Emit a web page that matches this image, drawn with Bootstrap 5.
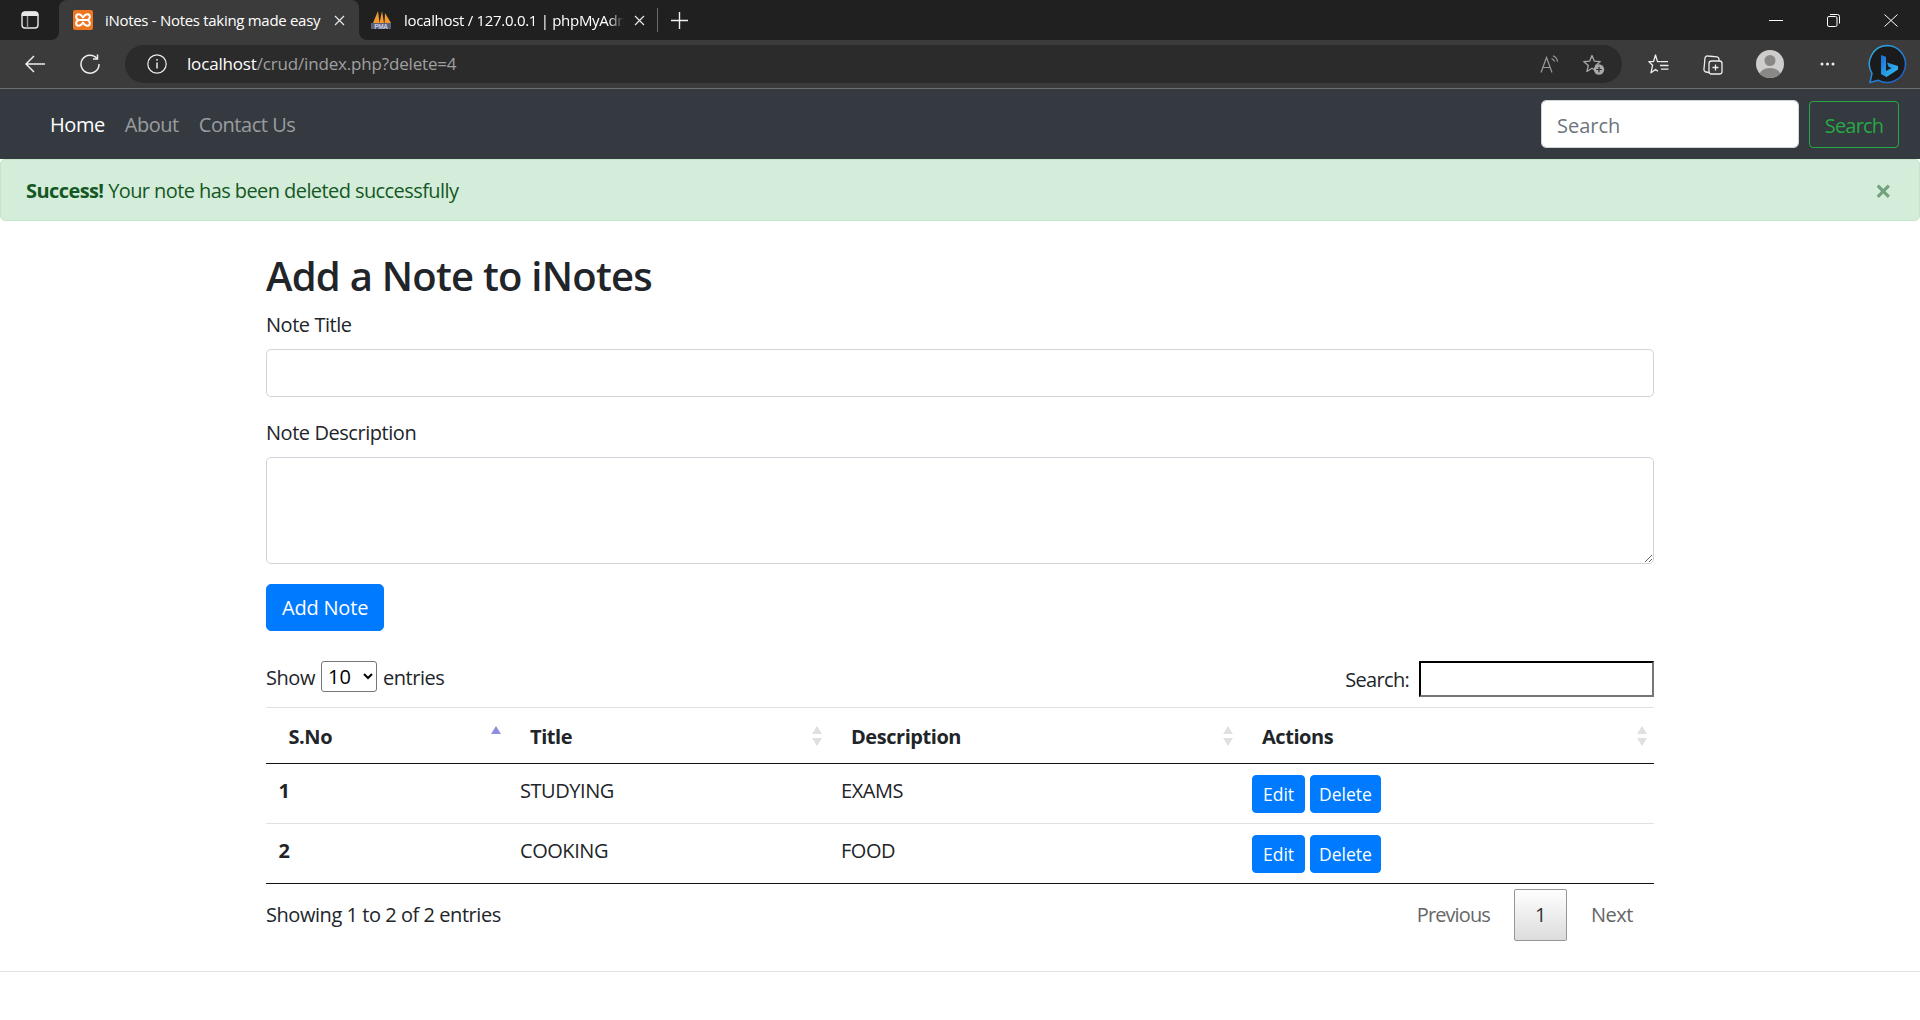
<!DOCTYPE html>
<html lang="en">
<head>
  <meta charset="UTF-8" />
  <meta name="viewport" content="width=device-width, initial-scale=1" />
  <title>iNotes - Notes taking made easy</title>
  <link href="https://cdn.jsdelivr.net/npm/bootstrap@5.3.3/dist/css/bootstrap.min.css" rel="stylesheet" />
  <style>
    html { font-size: 20px; }
    body {
      --bs-body-font-family: "Open Sans", "Noto Sans", sans-serif;
      --bs-body-font-size: 1rem;
      --bs-body-color: #212529;
      letter-spacing: -0.45px;
    }
    /* browser chrome */
    .tabstrip { height: 40px; background: linear-gradient(#202020 50%, #3b3b3b 50%); color: #fff; font-size: 15px; letter-spacing: -0.3px; }
    .strip-left { width: 59px; background: #202020; border-bottom-right-radius: 8px; }
    .strip-right { background: #202020; border-bottom-left-radius: 8px; padding-left: 11px; }
    .tab-on { width: 300px; background: #3b3b3b; border-radius: 8px 8px 0 0; padding-left: 14px; }
    .tab-off { width: 287px; padding-right: 12px; }
    .tab-title { margin-left: 12px; white-space: nowrap; overflow: hidden; flex: 1; }
    .tab-fade { -webkit-mask-image: linear-gradient(90deg, #000 93%, transparent); mask-image: linear-gradient(90deg, #000 93%, transparent); }
    .tab-x { margin-right: 14px; }
    .tab-x2 { margin-left: 10px; }
    .win-ctrl { gap: 44px; padding-right: 22px; }
    .toolbar { height: 49px; background: #3b3b3b; border-bottom: 1px solid #6e6e6e; padding-left: 25px; padding-right: 13px; }
    .urlbar { height: 38px; background: #2b2b2b; border-radius: 19px; margin-left: 25px; padding: 0 17px 0 22px; font-size: 17px; letter-spacing: -0.17px; color: #a0a0a0; }
    .urlbar b { font-weight: 400; color: #fff; }
    .ml-35 { margin-left: 35px; }
    .ml-26 { margin-left: 26px; }
    .ml-33 { margin-left: 33px; }
    .ml-36 { margin-left: 36px; }
    .ml-32 { margin-left: 32px; }
    .ml-20 { margin-left: 20px; }
    .ml-22 { margin-left: 22px; }
    .ml-13 { margin-left: 13px; }

    /* page */
    .nav-dark { background: #343a40; height: 70px; padding: 0 21px 0 40px; --bs-navbar-color: rgba(255,255,255,.5); --bs-navbar-active-color: #fff; --bs-navbar-nav-link-padding-x: .5rem; }
    .nav-dark .nav-link { padding-top: 11px; padding-bottom: 9px; }
    .nav-search { width: 258px; height: 48px; margin-right: 10px; border-radius: 5px; padding-top: 8px; padding-bottom: 6px; }
    .btn-search { --bs-btn-color: #28a745; --bs-btn-border-color: #28a745; --bs-btn-padding-x: 0; --bs-btn-border-radius: 4px; width: 90px; letter-spacing: -.8px; padding-top: 9px; padding-bottom: 6px; margin-top: 1px; }
    .alert-note { --bs-alert-padding-x: 1.25rem; --bs-alert-padding-y: .75rem; --bs-alert-margin-bottom: 0; --bs-alert-bg: #d4edda; --bs-alert-border-color: #c3e6cb; --bs-alert-color: #155724; --bs-alert-border-radius: 5px; letter-spacing: -.58px; padding-top: 16px; padding-bottom: 14px; }
    .alert-x { font-size: 30px; font-weight: 700; line-height: 30px; color: #155724; opacity: .5; margin-right: 2px; letter-spacing: 0; }
    .page-box { width: 1388px; margin: 30px auto; }
    .page-box h2 { font-weight: 600; line-height: 48px; margin-bottom: 9px; padding-top: 1px; letter-spacing: -.75px; }
    .page-box .form-label { padding-top: 1px; margin-bottom: 9px; }
    .form-control { border-color: #ced4da; border-radius: 5px; min-height: 48px; }
    .form-control::placeholder { color: #6c757d; }
    .note-area { height: 107px; }
    .btn-blue { --bs-btn-bg: #007bff; --bs-btn-border-color: #007bff; --bs-btn-hover-bg: #0069d9; --bs-btn-border-radius: 5px; }
    .btn-add { letter-spacing: -.2px; }
    .dt-select { width: 56px; height: 31px; font-size: 20px; border: 1px solid #767676; border-radius: 3px; background: #fff; margin: 0 6px; padding-left: 2px; }
    .dt-top > div span { padding-top: 2px; }
    .dt-search { width: 235px; height: 36px; border-width: 2px; border-style: inset; border-color: #1f1f1f #767676 #767676 #1f1f1f; margin-left: 10px; }
    .dt-search-label { letter-spacing: -.7px; padding-top: 2px; }
    .dt-top { height: 36px; margin-bottom: 10px; }
    .dt-table { table-layout: fixed; margin: 0; border-top: 1px solid #dee2e6; --bs-table-border-color: #dee2e6; }
    .dt-table th { height: 56px; padding: 2px 22.5px 0; border-bottom: 1px solid #111; vertical-align: middle; font-weight: 700; position: relative; }
    .dt-table td { height: 60px; padding: 12px 12.5px 0; vertical-align: top; }
    .dt-table td.acts { padding-top: 10.5px; }
    .dt-table tbody tr:last-child td { border-bottom: 1px solid #111; }
    .col-sno { width: 241.5px; }
    .col-title { width: 321px; }
    .col-desc { width: 411px; }
    .sort-arrows { position: absolute; right: 7px; top: 18px; }
    .btn-sm { --bs-btn-padding-x: .5rem; --bs-btn-padding-y: .25rem; --bs-btn-border-radius: 4px; }
    .btn-del { --bs-btn-padding-x: .4rem; }
    .dt-info { padding-top: 16px; }
    .dt-pages { --bs-pagination-padding-x: 1rem; --bs-pagination-padding-y: .5rem; --bs-pagination-color: #333; --bs-pagination-bg: transparent; --bs-pagination-border-color: transparent; --bs-pagination-disabled-color: #666; --bs-pagination-disabled-bg: transparent; --bs-pagination-disabled-border-color: transparent; --bs-pagination-border-radius: 2px; gap: 3px; margin: 5px 0 0; }
    .dt-pages .page-link { margin: 0 !important; }
    .dt-pages .page-prev { letter-spacing: -.9px; }
    .dt-pages .on { background: linear-gradient(#fff, #dcdcdc); border-color: #979797; color: #333; border-radius: 2px; }
    .foot-line { margin: 0; border: 0; border-top: 1px solid #e2e2e2; opacity: 1; }
  </style>
</head>
<body>
  <!-- browser window -->
  <div class="tabstrip d-flex">
    <div class="strip-left d-flex align-items-center justify-content-center">
      <svg width="18" height="18" viewBox="0 0 18 18" fill="none" stroke="#e8e8e8"><rect x="1" y="1" width="16" height="16" rx="3" stroke-width="1.4"/><path d="M1 4.5V4a3 3 0 0 1 3-3h10a3 3 0 0 1 3 3v.5z" fill="#e8e8e8"/><path d="M6.5 5v12" stroke="#9a9a9a" stroke-width="1.4"/></svg>
    </div>
    <div class="tab-on d-flex align-items-center">
      <svg width="20" height="20" viewBox="0 0 20 20" fill="none"><rect width="20" height="20" rx="2" fill="#f0751f"/><path d="M10 7.500Q7.500 3.500 5 4.300 2.500 5.200 3.300 7.800 4 10 6.500 10 4 10 3.300 12.200 2.500 14.800 5 15.700 7.500 16.500 10 12.500 12.500 16.500 15 15.700 17.500 14.800 16.700 12.200 16 10 13.500 10 16 10 16.700 7.800 17.500 5.200 15 4.300 12.500 3.500 10 7.500zM7 10h6" stroke="#fff" stroke-width="2" stroke-linejoin="round"/></svg>
      <span class="tab-title">iNotes - Notes taking made easy</span>
      <svg class="tab-x" width="11" height="11" viewBox="0 0 11 11" stroke="#e8e8e8" stroke-width="1.2"><path d="M1 1l9 9M10 1l-9 9"/></svg>
    </div>
    <div class="strip-right flex-grow-1 d-flex align-items-center">
      <div class="tab-off d-flex align-items-center">
        <svg width="22" height="20" viewBox="0 0 22 20"><path d="M3 13 8 1l1.500 12zM9.500 13 12 1l2 12zM14.500 13 15 3l6 10z" fill="#f29a2e"/><rect x="1" y="13" width="20" height="6" fill="#5a6078"/><text x="11" y="18.600" text-anchor="middle" font-size="6.500" font-weight="700" fill="#c8cce0" font-family="Liberation Sans, sans-serif">PMA</text></svg>
        <span class="tab-title tab-fade">localhost / 127.0.0.1 | phpMyAdmin</span>
        <svg class="tab-x2" width="11" height="11" viewBox="0 0 11 11" stroke="#e8e8e8" stroke-width="1.2"><path d="M1 1l9 9M10 1l-9 9"/></svg>
      </div>
      <svg width="1" height="24"><rect width="1" height="24" fill="#6a6a6a"/></svg>
      <svg class="ml-13" width="17" height="17" viewBox="0 0 17 17" stroke="#f0f0f0" stroke-width="1.4"><path d="M8.500 0v17M0 8.500h17"/></svg>
      <div class="win-ctrl ms-auto d-flex align-items-center">
        <svg width="14" height="13" viewBox="0 0 14 13" stroke="#fff"><path d="M0 6.500h14"/></svg>
        <svg width="13" height="13" viewBox="0 0 13 13" fill="none" stroke="#fff"><rect x=".5" y="2.500" width="9.500" height="10" rx="1.500"/><path d="M3 .5h7.500a2 2 0 0 1 2 2v7"/></svg>
        <svg width="14" height="13" viewBox="0 0 14 13" stroke="#fff"><path d="M.5.5l13 12M13.500.5l-13 12"/></svg>
      </div>
    </div>
  </div>

  <div class="toolbar d-flex align-items-center">
    <svg width="20" height="18" viewBox="0 0 20 18" fill="none" stroke="#eee" stroke-width="1.5"><path d="M9 1 1 9l8 8M1 9h19"/></svg>
    <svg class="ml-35" width="20" height="20" viewBox="0 0 20 20" fill="none" stroke="#eee" stroke-width="1.5"><path d="M17 4.500A9 9 0 1 0 19 10"/><path d="M17.500 .5v4.500H13"/></svg>
    <div class="urlbar flex-grow-1 d-flex align-items-center">
      <svg width="20" height="20" viewBox="0 0 20 20" fill="none" stroke="#eee" stroke-width="1.2"><circle cx="10" cy="10" r="9.200"/><path d="M10 8.500v6" stroke-width="1.500"/><circle cx="10" cy="5.800" r=".9" fill="#eee" stroke="none"/></svg>
      <span class="ml-20"><b>localhost</b>/crud/index.php?delete=4</span>
      <svg class="ms-auto" width="21" height="18" viewBox="0 0 21 18" fill="none" stroke="#9a9a9a" stroke-width="1.2"><path d="M1 17.500 6.500 2.500 12 17.500M3 12.500h7"/><path d="M11.500 3.500a4 4 0 0 1 3 3M13 .8a7 7 0 0 1 4.500 6"/></svg>
      <svg class="ml-22" width="22" height="21" viewBox="0 0 22 21" fill="none"><path d="M9 1.500l2.300 5.600 6 .5-4.600 3.900 1.400 5.900L9 14.300 3.900 17.500l1.400-5.900L.7 7.600l6-.5z" stroke="#a8a8a8" stroke-width="1.3" stroke-linejoin="round"/><circle cx="16" cy="15.500" r="5.200" fill="#a8a8a8"/><path d="M16 12.800v5.400M13.300 15.500h5.400" stroke="#2b2b2b" stroke-width="1.2"/></svg>
    </div>
    <svg class="ml-26" width="21" height="20" viewBox="0 0 21 20" fill="none" stroke="#eee" stroke-width="1.3"><path d="M12.800 7.600H9.500L7.500 1 5.500 7.600H.8l3.800 3.600L3 18.800l4.500-3.400 2.500 1.900" stroke-linejoin="round"/><path d="M13 7.600h7M12 11.500h8.500M13 15.200h7.500"/></svg>
    <svg class="ml-33" width="21" height="21" viewBox="0 0 21 21" fill="none" stroke="#eee" stroke-width="1.3"><rect x="7" y="7" width="13" height="13" rx="2.500"/><path d="M13.500 10.500v6M10.500 13.500h6"/><path d="M7 18.500 4 18a2.500 2.500 0 0 1-2-3L3 4a2.500 2.500 0 0 1 3-2l9 .8a2.500 2.500 0 0 1 2 2.500V7"/></svg>
    <svg class="ml-33" width="28" height="28" viewBox="0 0 28 28"><defs><clipPath id="avatarClip"><circle cx="14" cy="14" r="14"/></clipPath></defs><circle cx="14" cy="14" r="14" fill="#cfcdcb"/><g clip-path="url(#avatarClip)" fill="#8a8886"><circle cx="14" cy="10.500" r="5.500"/><ellipse cx="14" cy="25" rx="10.500" ry="7"/></g></svg>
    <svg class="ml-36" width="15" height="4" viewBox="0 0 15 4" fill="#eee"><circle cx="2" cy="2" r="1.500"/><circle cx="7.500" cy="2" r="1.500"/><circle cx="13" cy="2" r="1.500"/></svg>
    <svg class="ml-32" width="40" height="40" viewBox="0 0 40 40"><defs><linearGradient id="bingRing" x1="0" y1="0" x2="1" y2="1"><stop offset="0" stop-color="#2fb5e8"/><stop offset="1" stop-color="#1a55c8"/></linearGradient><linearGradient id="bingB" x1="0" y1="0" x2="1" y2="1"><stop offset="0" stop-color="#1a6ed8"/><stop offset="1" stop-color="#35c1f1"/></linearGradient></defs><path d="M20 1.500A18.500 18.500 0 1 1 11 36.200L3 38.500l2-9A18.500 18.500 0 0 1 20 1.500z" fill="#1b1b1b" stroke="url(#bingRing)" stroke-width="1.500"/><path d="M14 11l5 1.800V27l5.500-3-3-1.300-1.500-4.200L31 22v3.500L19.500 33 14 30z" fill="url(#bingB)"/></svg>
  </div>

  <!-- site -->
  <nav class="navbar navbar-expand navbar-dark nav-dark">
    <ul class="navbar-nav me-auto">
      <li class="nav-item"><a class="nav-link active" href="#">Home</a></li>
      <li class="nav-item"><a class="nav-link" href="#">About</a></li>
      <li class="nav-item"><a class="nav-link" href="#">Contact Us</a></li>
    </ul>
    <form class="d-flex align-items-center">
      <input class="form-control nav-search" type="search" placeholder="Search" />
      <button class="btn btn-outline-success btn-search" type="button">Search</button>
    </form>
  </nav>

  <div class="alert alert-note d-flex justify-content-between align-items-center" role="alert">
    <div><strong>Success!</strong> Your note has been deleted successfully</div>
    <button type="button" class="btn border-0 p-0 alert-x" aria-label="Close">×</button>
  </div>

  <div class="page-box">
    <h2>Add a Note to iNotes</h2>
    <form>
      <div class="mb-3">
        <label for="title" class="form-label">Note Title</label>
        <input type="text" class="form-control" id="title" />
      </div>
      <div class="mb-3">
        <label for="desc" class="form-label">Note Description</label>
        <textarea class="form-control note-area" id="desc"></textarea>
      </div>
      <button type="button" class="btn btn-primary btn-blue btn-add">Add Note</button>
    </form>
  </div>

  <div class="page-box">
    <div class="dt-top d-flex justify-content-between">
      <div class="d-flex align-items-start">
        <span>Show</span>
        <select class="dt-select"><option>10</option><option>25</option></select>
        <span>entries</span>
      </div>
      <div class="d-flex align-items-center">
        <label for="dtSearch" class="dt-search-label">Search:</label>
        <input class="dt-search" id="dtSearch" type="search" />
      </div>
    </div>

    <table class="table dt-table">
      <thead>
        <tr>
          <th class="col-sno">S.No
            <svg class="sort-arrows" width="10" height="20" viewBox="0 0 10 20"><path d="M5 0l5 8H0z" fill="#8f8fe0"/></svg>
          </th>
          <th class="col-title">Title
            <svg class="sort-arrows" width="10" height="20" viewBox="0 0 10 20" fill="#e0e0e0"><path d="M5 0l5 8H0zM5 20l5-8H0z"/></svg>
          </th>
          <th class="col-desc">Description
            <svg class="sort-arrows" width="10" height="20" viewBox="0 0 10 20" fill="#e0e0e0"><path d="M5 0l5 8H0zM5 20l5-8H0z"/></svg>
          </th>
          <th>Actions
            <svg class="sort-arrows" width="10" height="20" viewBox="0 0 10 20" fill="#e0e0e0"><path d="M5 0l5 8H0zM5 20l5-8H0z"/></svg>
          </th>
        </tr>
      </thead>
      <tbody>
        <tr>
          <td class="fw-bold">1</td>
          <td>STUDYING</td>
          <td>EXAMS</td>
          <td class="acts"><button class="btn btn-sm btn-primary btn-blue me-1">Edit</button><button class="btn btn-sm btn-primary btn-blue btn-del">Delete</button></td>
        </tr>
        <tr>
          <td class="fw-bold">2</td>
          <td>COOKING</td>
          <td>FOOD</td>
          <td class="acts"><button class="btn btn-sm btn-primary btn-blue me-1">Edit</button><button class="btn btn-sm btn-primary btn-blue btn-del">Delete</button></td>
        </tr>
      </tbody>
    </table>

    <div class="d-flex justify-content-between">
      <div class="dt-info">Showing 1 to 2 of 2 entries</div>
      <ul class="pagination dt-pages">
        <li class="page-item disabled"><a class="page-link page-prev" href="#">Previous</a></li>
        <li class="page-item"><a class="page-link on" href="#">1</a></li>
        <li class="page-item disabled"><a class="page-link" href="#">Next</a></li>
      </ul>
    </div>
  </div>
  <hr class="foot-line" />

  <script src="https://cdn.jsdelivr.net/npm/bootstrap@5.3.3/dist/js/bootstrap.bundle.min.js"></script>
</body>
</html>
